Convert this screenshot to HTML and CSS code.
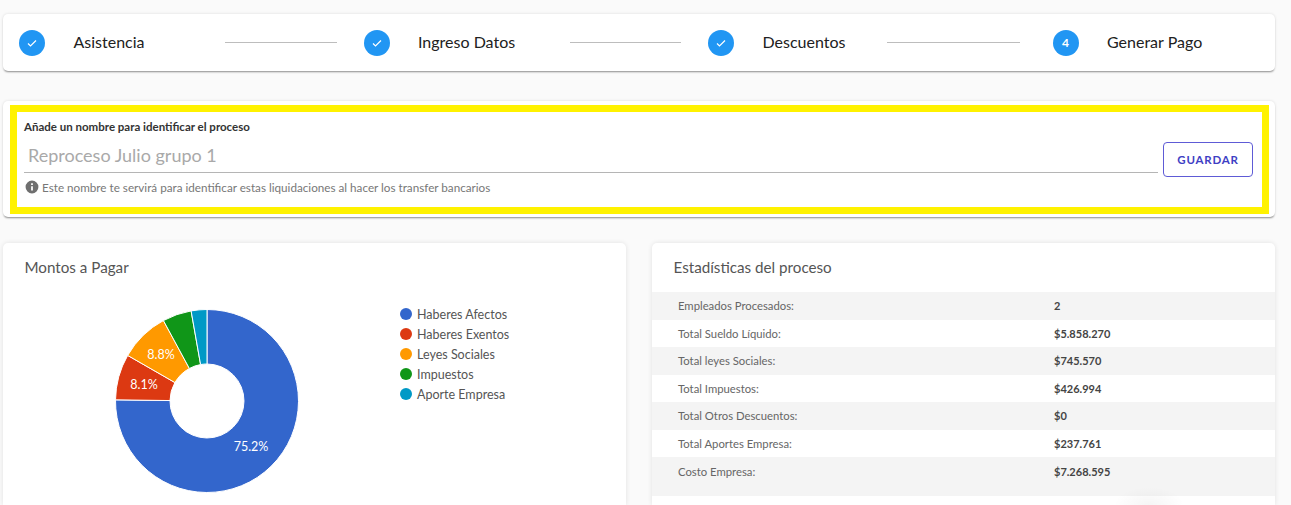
FILE: index.html
```html
<!DOCTYPE html>
<html lang="es">
<head>
    <meta charset="UTF-8">
    <meta name="viewport" content="width=device-width, initial-scale=1.0">
    <title>Generar Pago</title>
    <link rel="stylesheet" href="styles.css">
</head>
<body>

<div class="card stepper">
    <div class="step">
        <span class="step-icon">
            <svg width="12" height="12" viewBox="0 0 24 24"><path d="M4 13l5 5L20 7" fill="none" stroke="#fff" stroke-width="2.4"/></svg>
        </span>
        <span class="step-label">Asistencia</span>
        <span class="step-line"></span>
    </div>
    <div class="step">
        <span class="step-icon">
            <svg width="12" height="12" viewBox="0 0 24 24"><path d="M4 13l5 5L20 7" fill="none" stroke="#fff" stroke-width="2.4"/></svg>
        </span>
        <span class="step-label">Ingreso Datos</span>
        <span class="step-line"></span>
    </div>
    <div class="step">
        <span class="step-icon">
            <svg width="12" height="12" viewBox="0 0 24 24"><path d="M4 13l5 5L20 7" fill="none" stroke="#fff" stroke-width="2.4"/></svg>
        </span>
        <span class="step-label step-label-short">Descuentos</span>
        <span class="step-line step-line-last"></span>
    </div>
    <div class="step">
        <span class="step-icon">4</span>
        <span class="step-label">Generar Pago</span>
    </div>
</div>

<div class="card name-card">
    <div class="name-box">
        <div class="name-field">
            <label class="name-label" for="name">Añade un nombre para identificar el proceso</label>
            <input class="name-input" id="name" type="text" placeholder="Reproceso Julio grupo 1">
            <p class="name-hint">
                <svg width="14" height="14" viewBox="0 0 24 24"><path d="M12 1a11 11 0 1 0 0 22 11 11 0 0 0 0-22zm1.500 17h-3v-7.500h3zm0-9.500h-3v-3h3z" fill="#6f6f6f"/></svg>
                Este nombre te servirá para identificar estas liquidaciones al hacer los transfer bancarios
            </p>
        </div>
        <button class="save-button">GUARDAR</button>
    </div>
</div>

<div class="columns">
    <div class="card panel">
        <h2 class="panel-title">Montos a Pagar</h2>
        <div class="chart">
            <svg class="donut" width="184" height="184" viewBox="-92 -92 184 184">
                <g stroke="#fff" stroke-width="1">
                    <path d="M0 -91.500A91.500 91.500 0 1 1 -91.490 -1.150L-37 -.46A37 37 0 1 0 0 -37Z" fill="#3366cc"/>
                    <path d="M-91.490 -1.150A91.500 91.500 0 0 1 -79.320 -45.590L-32.080 -18.440A37 37 0 0 0 -37 -.46Z" fill="#dc3912"/>
                    <path d="M-79.320 -45.590A91.500 91.500 0 0 1 -43.580 -80.460L-17.620 -32.530A37 37 0 0 0 -32.080 -18.440Z" fill="#ff9900"/>
                    <path d="M-43.580 -80.460A91.500 91.500 0 0 1 -15.890 -90.110L-6.420 -36.440A37 37 0 0 0 -17.620 -32.530Z" fill="#109618"/>
                    <path d="M-15.890 -90.110A91.500 91.500 0 0 1 0 -91.500L0 -37A37 37 0 0 0 -6.420 -36.440Z" fill="#0099c6"/>
                </g>
                <text class="donut-text" x="44" y="49.500">75.2%</text>
                <text class="donut-text" x="-63" y="-12.500">8.1%</text>
                <text class="donut-text" x="-46" y="-42.500">8.8%</text>
            </svg>
            <ul class="legend">
                <li class="legend-item"><span class="dot dot-blue"></span>Haberes Afectos</li>
                <li class="legend-item"><span class="dot dot-red"></span>Haberes Exentos</li>
                <li class="legend-item"><span class="dot dot-orange"></span>Leyes Sociales</li>
                <li class="legend-item"><span class="dot dot-green"></span>Impuestos</li>
                <li class="legend-item"><span class="dot dot-cyan"></span>Aporte Empresa</li>
            </ul>
        </div>
    </div>

    <div class="card panel panel-stats">
        <h2 class="panel-title">Estadísticas del proceso</h2>
        <table class="stats">
            <tr><td>Empleados Procesados:</td><td>2</td></tr>
            <tr><td>Total Sueldo Líquido:</td><td>$5.858.270</td></tr>
            <tr><td>Total leyes Sociales:</td><td>$745.570</td></tr>
            <tr><td>Total Impuestos:</td><td>$426.994</td></tr>
            <tr><td>Total Otros Descuentos:</td><td>$0</td></tr>
            <tr><td>Total Aportes Empresa:</td><td>$237.761</td></tr>
            <tr class="stats-last"><td>Costo Empresa:</td><td>$7.268.595</td></tr>
        </table>
        <div class="smudge"></div>
    </div>
</div>

</body>
</html>
```

FILE: styles.css
```css
body {
    box-sizing: border-box;
    height: 505px;
    margin: 0;
    padding: 14px 16px 0 3px;
    overflow: hidden;
    background-color: #fafafa;
    font-family: Lato, "Noto Sans", sans-serif;
    color: #212121;
}
.card {
    background-color: #fff;
    border-radius: 5px;
    box-shadow: 0 2px 2px -1px rgba(0, 0, 0, 0.4), 0 0 3px rgba(0, 0, 0, 0.12);
}

/* pasos */
.stepper {
    display: grid;
    grid-template-columns: repeat(3, 344.500px) 1fr;
    align-items: center;
    height: 57px;
    padding-left: 16px;
}
.step {
    display: flex;
    align-items: center;
}
.step-icon {
    display: flex;
    justify-content: center;
    align-items: center;
    flex: none;
    width: 26px;
    height: 26px;
    border-radius: 50%;
    background-color: #2196f3;
    color: #fff;
    font-size: 12px;
    font-weight: 700;
}
.step-label {
    width: 151.500px;
    margin-left: 28.500px;
    padding-bottom: 2px;
    font-size: 16px;
}
.step-label-short {
    width: 124px;
}
.step-line {
    flex: 1;
    height: 1px;
    margin-right: 27px;
    background-color: #bdbdbd;
}
.step-line-last {
    margin-right: 33px;
}

/* nombre del proceso */
.name-card {
    box-sizing: border-box;
    height: 116px;
    margin-top: 30px;
    padding: 4px 6px 3px 7px;
}
.name-box {
    display: flex;
    align-items: flex-start;
    box-sizing: border-box;
    height: 109px;
    padding: 0 9px 0 7px;
    border: 7px solid #fff200;
}
.name-field {
    flex: 1;
}
.name-label {
    display: block;
    margin-top: 7px;
    font-size: 11.500px;
    font-weight: 700;
    line-height: 15px;
    color: #333;
}
.name-input {
    display: block;
    box-sizing: border-box;
    width: 100%;
    height: 39px;
    padding: 3px 4px 0;
    border: none;
    border-bottom: 1px solid #b5b5b5;
    outline: none;
    font-family: inherit;
    font-size: 18px;
}
.name-input::placeholder {
    color: #a9a9a9;
}
.name-hint {
    display: flex;
    align-items: center;
    gap: 3px;
    margin: 7px 0 0 1px;
    font-size: 11.700px;
    color: #777;
}
.save-button {
    flex: none;
    width: 90px;
    height: 35px;
    margin: 30px 0 0 5px;
    border: 1px solid #5e5bd6;
    border-radius: 4px;
    background-color: #fff;
    color: #3f3fc4;
    font-family: inherit;
    font-size: 11.500px;
    font-weight: 700;
    letter-spacing: 0.8px;
}

/* paneles */
.columns {
    display: grid;
    grid-template-columns: 623px 623px;
    column-gap: 26px;
    margin-top: 26px;
}
.panel {
    position: relative;
    height: 262px;
    overflow: hidden;
    border-radius: 5px 5px 0 0;
    box-shadow: 0 0 5px rgba(0, 0, 0, 0.1);
}
.panel-title {
    margin: 0;
    padding: 15px 21.500px 0;
    font-size: 15.200px;
    font-weight: 400;
    line-height: 18px;
    color: #555;
}
.chart {
    display: flex;
    align-items: flex-start;
    padding: 28px 0 0 112px;
}
.donut {
    flex: none;
    margin-top: 5px;
}
.donut-text {
    fill: #fff;
    font-size: 12.500px;
    text-anchor: middle;
}
.legend {
    margin: 0 0 0 101px;
    padding: 0;
    list-style: none;
}
.legend-item {
    display: flex;
    align-items: center;
    height: 20px;
    font-size: 12.500px;
    color: #555;
}
.dot {
    width: 12px;
    height: 12px;
    margin-right: 5px;
    border-radius: 50%;
}
.dot-blue { background-color: #3366cc; }
.dot-red { background-color: #dc3912; }
.dot-orange { background-color: #ff9900; }
.dot-green { background-color: #109618; }
.dot-cyan { background-color: #0099c6; }

.stats {
    width: 100%;
    margin-top: 16px;
    border-collapse: collapse;
    font-size: 11.300px;
    color: #666;
}
.stats td {
    box-sizing: border-box;
    height: 27.500px;
    padding: 0 0 0 26px;
}
.stats td:first-child {
    width: 402px;
}
.stats td:last-child {
    padding-left: 0;
    font-size: 11px;
    font-weight: 700;
    color: #444;
}
.stats tr:nth-child(odd) {
    background-color: #f4f4f4;
}
.stats .stats-last td {
    height: 39px;
    padding-bottom: 11px;
}
.smudge {
    position: absolute;
    left: 462px;
    top: 244px;
    width: 70px;
    height: 36px;
    background: radial-gradient(closest-side, rgba(0, 0, 0, 0.04), rgba(0, 0, 0, 0));
}
```
